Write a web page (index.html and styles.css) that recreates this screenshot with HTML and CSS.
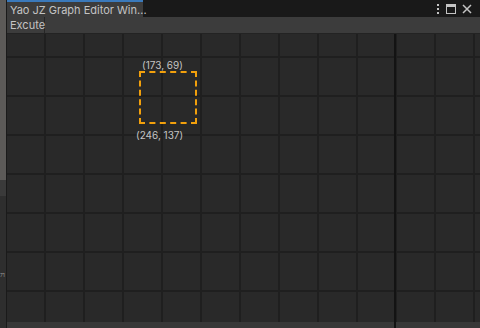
FILE: index.html
```html
<!DOCTYPE html>
<html>
<head>
  <meta charset="UTF-8">
  <title>Yao JZ Graph Editor Window</title>
  <link rel="stylesheet" href="styles.css">
</head>
<body>
  <div class="side">
    <div class="side-top"></div>
    <div class="side-bar"></div>
    <div class="side-bottom"><span class="side-text">71</span></div>
  </div>
  <div class="window">
    <div class="tabbar">
      <div class="tab">Yao JZ Graph Editor Win...</div>
      <div class="tab-tools">
        <svg width="4" height="12" viewBox="0 0 4 12">
          <rect x="1" y="1" width="2" height="2" fill="#c4c4c4"/>
          <rect x="1" y="5" width="2" height="2" fill="#c4c4c4"/>
          <rect x="1" y="9" width="2" height="2" fill="#c4c4c4"/>
        </svg>
        <svg width="10" height="10" viewBox="0 0 10 10">
          <rect x="0.5" y="0.5" width="9" height="9" fill="none" stroke="#c4c4c4"/>
          <rect x="1" y="1" width="8" height="2" fill="#c4c4c4"/>
        </svg>
        <svg width="10" height="10" viewBox="0 0 10 10">
          <path d="M1 1 L9 9 M9 1 L1 9" stroke="#c4c4c4" stroke-width="1.5"/>
        </svg>
      </div>
    </div>
    <div class="toolbar">
      <button class="tool-btn">Excute</button>
    </div>
    <div class="canvas">
      <div class="major-line"></div>
      <div class="coord coord-start">(173, 69)</div>
      <div class="selection"></div>
      <div class="coord coord-end">(246, 137)</div>
    </div>
    <div class="footer"></div>
  </div>
</body>
</html>
```

FILE: styles.css
```css
html, body {
  margin: 0;
  height: 100%;
}
body {
  display: flex;
  background: #282828;
  font-family: Inter, 'Noto Sans', sans-serif;
  font-size: 11px;
  color: #c4c4c4;
  overflow: hidden;
}
.side {
  width: 6px;
  display: flex;
  flex-direction: column;
  flex-shrink: 0;
}
.side-top {
  height: 180px;
  background: #5c5a58;
}
.side-bar {
  height: 16px;
  background: #3a3a3a;
}
.side-bottom {
  flex: 1;
  background: #2e2e2e;
  position: relative;
}
.side-text {
  position: absolute;
  left: 0;
  top: 76px;
  font-size: 5px;
  color: #9a9a9a;
}
.window {
  flex: 1;
  display: flex;
  flex-direction: column;
  border-left: 1px solid #1a1a1a;
}
.tabbar {
  height: 17px;
  background: #191919;
  display: flex;
  align-items: stretch;
}
.tab {
  width: 133px;
  padding-left: 3px;
  background: #3c3c3c;
  border-top: 2px solid #3a79bb;
  line-height: 16px;
  white-space: nowrap;
}
.tab-tools {
  margin-left: auto;
  display: flex;
  align-items: center;
  gap: 6px;
  padding-right: 8px;
}
.toolbar {
  height: 16px;
  background: #3c3c3c;
  border-bottom: 1px solid #232323;
  display: flex;
}
.tool-btn {
  font: inherit;
  color: #c4c4c4;
  background: #3c3c3c;
  border: none;
  border-right: 1px solid #262626;
  padding: 0 0 0 3px;
  width: 38px;
  text-align: left;
}
.canvas {
  flex: 1;
  position: relative;
  background-color: #292929;
  background-image:
    linear-gradient(to right, #1f1f1f 2px, transparent 2px),
    linear-gradient(to bottom, #1f1f1f 2px, transparent 2px);
  background-size: 39px 39px;
  background-position: 37px 22px;
}
.major-line {
  position: absolute;
  left: 387px;
  top: 0;
  bottom: -6px;
  width: 2px;
  background: #131313;
}
.selection {
  position: absolute;
  left: 132px;
  top: 37px;
  width: 54px;
  height: 49px;
  border: 2px dashed #f2a00c;
}
.coord {
  position: absolute;
  font-size: 10px;
  color: #c4c4c4;
}
.coord-start {
  left: 135px;
  top: 25px;
}
.coord-end {
  left: 129px;
  top: 95px;
}
.footer {
  height: 6px;
  background: #383838;
}
```
